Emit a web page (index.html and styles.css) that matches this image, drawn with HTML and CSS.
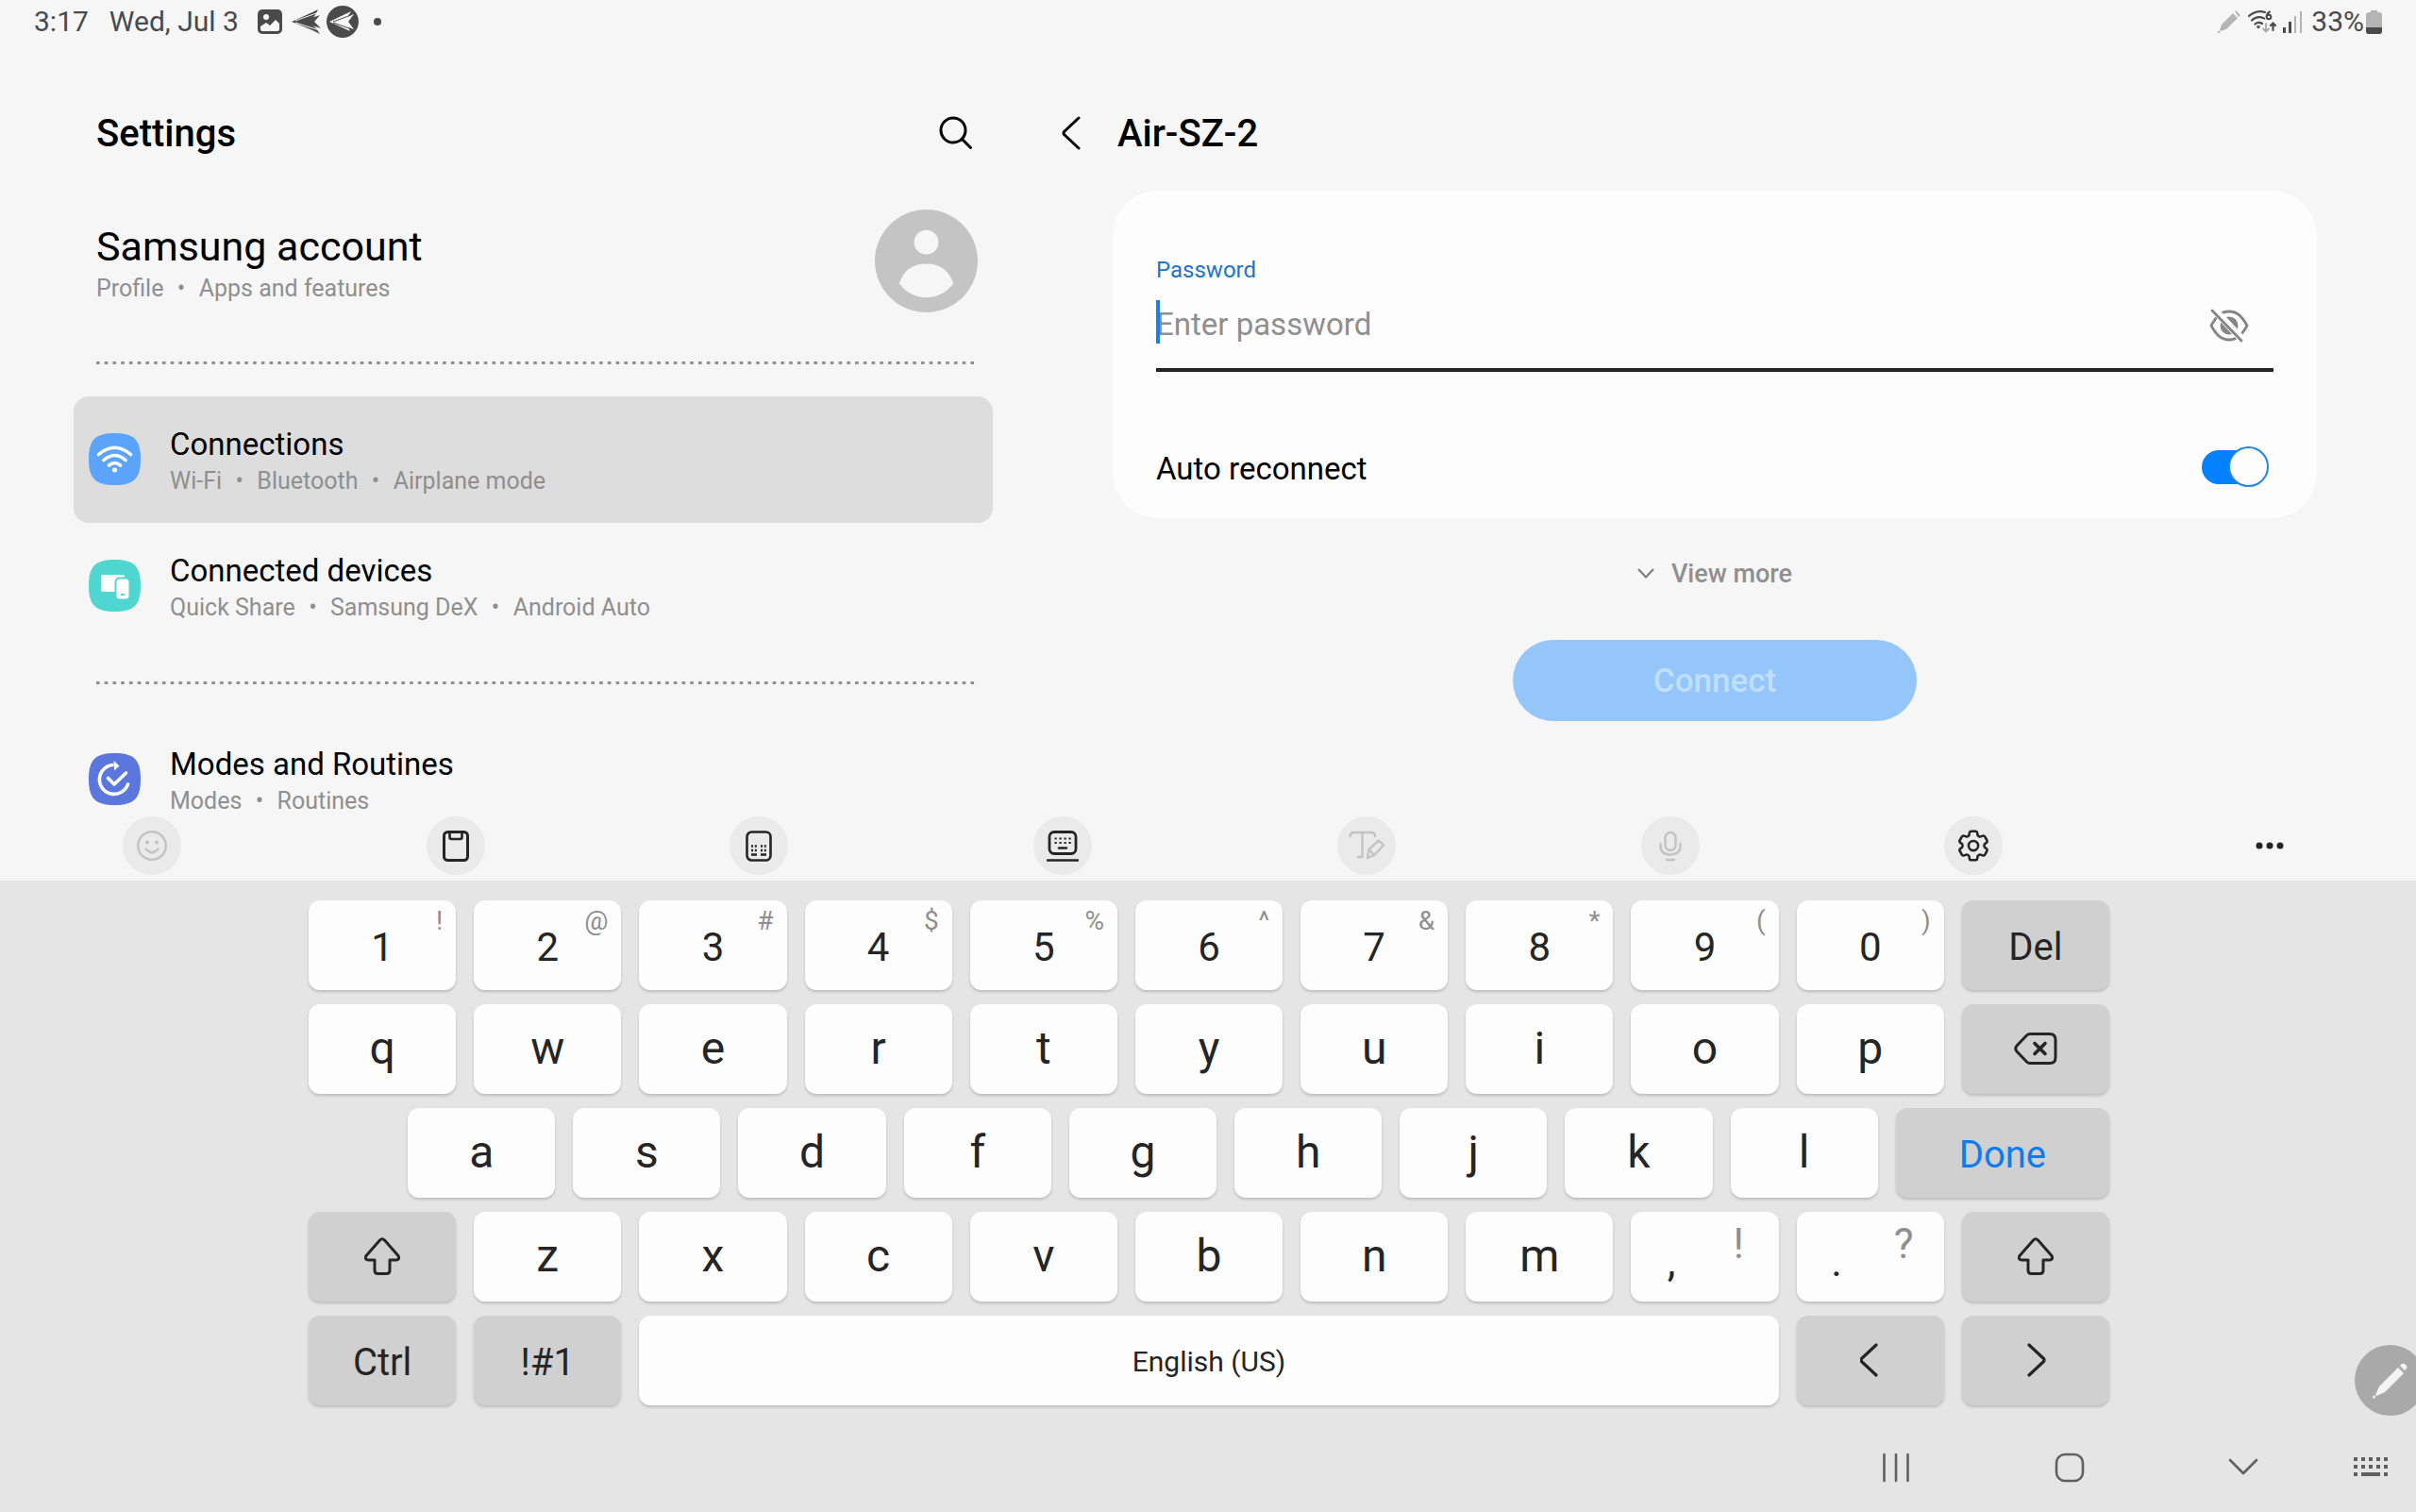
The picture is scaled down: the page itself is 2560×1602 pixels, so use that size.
FILE: index.html
```html
<!DOCTYPE html>
<html lang="en">
<head>
<meta charset="utf-8">
<meta name="viewport" content="width=device-width, initial-scale=1">
<title>Wi-Fi network settings</title>
<link rel="stylesheet" href="styles.css">
</head>
<body>
<header class="status">
  <div class="status-left">
    <span>3:17</span>
    <span class="date">Wed, Jul 3</span>
    <svg class="st-picture" width="26" height="26" viewBox="0 0 26 26"><rect width="26" height="26" rx="5" fill="#4a4a4a"/><circle cx="9" cy="8" r="3" fill="#f6f6f6"/><path d="M3 18l6-4 4 3 6-6 4 4v6a2 2 0 0 1-2 2H5a2 2 0 0 1-2-2z" fill="#f6f6f6"/></svg>
    <svg class="st-plane" width="32" height="26" viewBox="0 0 32 26"><path d="M0 13L22 3l6-3-3 6-4 5 1 2-1 3 5 4 4 6-8-4z" fill="#4a4a4a"/><path d="M4 12L29 3M4 14l25 8" stroke="#f6f6f6" stroke-width="1"/><path d="M12 12l18-6-6 7 7 7-19-6z" fill="#4a4a4a"/></svg>
    <svg class="st-disc" width="34" height="34" viewBox="0 0 34 34"><circle cx="17" cy="17" r="17" fill="#4a4a4a"/><path d="M3 17L26 6l-3 5 6-2-6 8 6 8-6-2 2 4z" fill="#f6f6f6"/><path d="M7 17l19-7M7 18l17 6" stroke="#4a4a4a" stroke-width="1"/></svg>
    <span class="st-dot"></span>
  </div>
  <div class="status-right">
    <svg width="24" height="24" viewBox="0 0 24 24" fill="#b4b4b4"><path d="M16 3l5 5L9 20l-6 2-1-1 2-6zM18 1l1-1 5 5-2 2z"/><circle cx="1" cy="23" r="1.200"/></svg>
    <svg class="st-wifi" width="30" height="24" viewBox="0 0 30 24" fill="none" stroke="#4a4a4a" stroke-width="2.200" stroke-linecap="round"><path d="M1 6Q9-1 18 2M4 10.500Q10 5 17 8.500M7.500 14.500Q11 11.500 15 14"/><circle cx="11" cy="17.500" r=".7"/><circle cx="22" cy="7" r="2.300" stroke-width="2"/><path d="M19.700 6.500Q20 3 23 1.500" stroke-width="2"/><path d="M19 14v8M16 19.500l3 3 3-3" stroke="#a9a9a9" stroke-width="1.800"/><path d="M26.500 21v-7M24 16l2.500-2.500L29 16"/></svg>
    <svg width="20" height="23" viewBox="0 0 20 23"><path d="M0 17h3v6H0zM6 11h3v12H6z" fill="#4a4a4a"/><path d="M12 5h2v18h-2zM18 0h2v23h-2z" fill="#b4b4b4"/></svg>
    <span class="percent">33%</span>
    <svg width="17" height="25" viewBox="0 0 17 25"><path d="M5 0h7v2h2a3 3 0 0 1 3 3v17a3 3 0 0 1-3 3H3a3 3 0 0 1-3-3V5a3 3 0 0 1 3-3h2z" fill="#b4b4b4"/><path d="M0 18h17v4a3 3 0 0 1-3 3H3a3 3 0 0 1-3-3z" fill="#4a4a4a"/></svg>
  </div>
</header>

<main class="screen">
  <nav class="panel-left" aria-label="Settings">
    <div class="bar">
      <h1>Settings</h1>
      <button class="plain" aria-label="Search"><svg width="36" height="36" viewBox="0 0 36 36" fill="none" stroke="#000" stroke-width="3" stroke-linecap="round"><circle cx="15" cy="15" r="13"/><path d="M24.500 24.500l9 9"/></svg></button>
    </div>
    <a class="account" href="#account">
      <span class="words">
        <span class="account-name">Samsung account</span>
        <span class="sub">Profile <span class="sep">&nbsp;•&nbsp;</span> Apps and features</span>
      </span>
      <svg width="109" height="109" viewBox="0 0 110 110"><circle cx="55" cy="55" r="55" fill="#c4c4c4"/><circle cx="55" cy="35" r="13" fill="#f6f6f6"/><path d="M26 79Q33 58 55 58t29 21Q73 94 55 94T26 79z" fill="#f6f6f6"/></svg>
    </a>
    <svg class="dots" height="3"><line x1="0" y1="1.500" x2="100%" y2="1.500" stroke="#8f8f8f" stroke-width="3" stroke-dasharray="3.600 5.140"/></svg>
    <a class="row selected" href="#connections">
      <svg width="55" height="55" viewBox="0 0 55 55"><path d="M27.500 0C48 0 55 7 55 27.500S48 55 27.500 55 0 48 0 27.500 7 0 27.500 0z" fill="#5aa5fb"/><g fill="none" stroke="#fff" stroke-width="3.600" stroke-linecap="round"><path d="M10.500 22.500Q27.500 8 44.500 22.500M16 28.500Q27.500 18.500 39 28.500M21.500 34Q27.500 29 33.500 34"/></g><circle cx="27.500" cy="39" r="2.500" fill="#fff"/></svg>
      <span class="words"><span class="title">Connections</span><span class="sub">Wi-Fi <span class="sep">&nbsp;•&nbsp;</span> Bluetooth <span class="sep">&nbsp;•&nbsp;</span> Airplane mode</span></span>
    </a>
    <a class="row" href="#devices">
      <svg width="55" height="55" viewBox="0 0 55 55"><path d="M27.500 0C48 0 55 7 55 27.500S48 55 27.500 55 0 48 0 27.500 7 0 27.500 0z" fill="#50d6d0"/><rect x="13" y="16" width="25" height="18" rx="2" fill="#fff"/><rect x="28.500" y="19.500" width="15" height="23" rx="4" fill="#fff" stroke="#50d6d0" stroke-width="2"/><rect x="34" y="36" width="4" height="2" fill="#50d6d0"/></svg>
      <span class="words"><span class="title">Connected devices</span><span class="sub">Quick Share <span class="sep">&nbsp;•&nbsp;</span> Samsung DeX <span class="sep">&nbsp;•&nbsp;</span> Android Auto</span></span>
    </a>
    <svg class="dots dots-list" height="3"><line x1="0" y1="1.500" x2="100%" y2="1.500" stroke="#8f8f8f" stroke-width="3" stroke-dasharray="3.600 5.140"/></svg>
    <a class="row" href="#modes">
      <svg width="55" height="55" viewBox="0 0 55 55"><path d="M27.500 0C48 0 55 7 55 27.500S48 55 27.500 55 0 48 0 27.500 7 0 27.500 0z" fill="#5b77dd"/><g fill="none" stroke="#fff" stroke-width="3.600" stroke-linecap="round" stroke-linejoin="round"><path d="M25 12.500A15.500 15.500 0 1 0 41.500 33M20.500 26.500l6.500 6.500 12.500-12"/></g><path d="M26.500 8l6 5.500-5.500 5z" fill="#fff"/></svg>
      <span class="words"><span class="title">Modes and Routines</span><span class="sub">Modes <span class="sep">&nbsp;•&nbsp;</span> Routines</span></span>
    </a>
  </nav>

  <section class="panel-right">
    <div class="bar bar-right">
      <button class="plain" aria-label="Back"><svg width="22" height="36" viewBox="0 0 22 36" fill="none" stroke="#000" stroke-width="3" stroke-linecap="round" stroke-linejoin="round"><path d="M19 2L3.500 16.500q-1 1.500 0 3L19 34"/></svg></button>
      <h1>Air-SZ-2</h1>
    </div>
    <form class="form">
      <div class="card">
        <label class="pw-label" for="pw">Password</label>
        <div class="field">
          <input class="pw" id="pw" type="password" placeholder="Enter password">
          <span class="caret"></span>
          <button class="plain" type="button" aria-label="Show password"><svg width="42" height="36" viewBox="0 0 42 36"><g fill="none" stroke="#858585" stroke-width="2.800"><path d="M21 3c9 0 14 6 19 15-5 9-10 15-19 15S7 27 2 18C7 9 12 3 21 3z"/></g><circle cx="21" cy="18" r="9.500" fill="#858585"/><path d="M5 1l31 33" stroke="#fdfdfd" stroke-width="8"/><path d="M3 2l31 32" stroke="#858585" stroke-width="2.800" stroke-linecap="round"/></svg></button>
        </div>
        <div class="reconnect">
          <label for="auto">Auto reconnect</label>
          <input class="toggle" id="auto" type="checkbox" checked>
        </div>
      </div>
      <button class="plain more" type="button"><svg width="18" height="12" viewBox="0 0 18 12" fill="none" stroke="#7a7a7a" stroke-width="2" stroke-linecap="round"><path d="M1.500 1.500L9 9.500l7.500-8"/></svg>View more</button>
      <button class="connect" type="submit" disabled>Connect</button>
    </form>
  </section>
</main>

<div class="toolbar">
  <button class="tool" aria-label="Emoji"><svg width="32" height="32" viewBox="0 0 32 32" fill="none" stroke="#c3c3c3" stroke-width="2.400" stroke-linecap="round"><circle cx="16" cy="16" r="14.800"/><path d="M9.500 19.500q6.500 7.500 13 0"/><g fill="#c3c3c3" stroke="none"><circle cx="11" cy="12.500" r="2"/><circle cx="21" cy="12.500" r="2"/></g></svg></button>
  <button class="tool" aria-label="Clipboard"><svg width="28" height="33" viewBox="0 0 28 33" fill="none" stroke="#252525" stroke-width="3"><rect x="1.500" y="1.500" width="25" height="30" rx="4"/><path d="M7.500 2v5q0 2 2 2h9q2 0 2-2V2" stroke-width="2.600"/></svg></button>
  <button class="tool" aria-label="Split keyboard"><svg width="28" height="33" viewBox="0 0 28 33" fill="none" stroke="#252525" stroke-width="2.600"><rect x="1.500" y="1.500" width="25" height="30" rx="5"/><path d="M6 16.500h6M16 16.500h6M6 21h6M16 21h6" stroke-dasharray="2 1.800"/><path d="M6 25.500h6M16 25.500h6"/></svg></button>
  <button class="tool" aria-label="Keyboard mode"><svg width="34" height="33" viewBox="0 0 34 33" fill="none" stroke="#252525" stroke-width="2.800"><rect x="3" y="1.500" width="28" height="23" rx="5"/><path d="M8.500 8.500h18M8.500 13h18" stroke-dasharray="2.200 2.800" stroke-width="2.200"/><path d="M13 18.500h8M1 31.500h32" stroke-linecap="round" stroke-width="2.600"/></svg></button>
  <button class="tool" aria-label="Handwriting"><svg width="38" height="32" viewBox="0 0 38 32" fill="none" stroke="#c3c3c3" stroke-width="2.400" stroke-linecap="round" stroke-linejoin="round"><path d="M1.500 6q0-4 4-4H24q4 0 4 4M14.500 2v26H10M20 29l1.500-9L32 10.500l5 5L27 26zM21.500 20l5.500 6"/></svg></button>
  <button class="tool" aria-label="Voice input"><svg width="24" height="33" viewBox="0 0 24 33" fill="none" stroke="#c3c3c3" stroke-width="2.400" stroke-linecap="round"><rect x="6.500" y="2" width="11" height="19" rx="5.500"/><path d="M1.500 14v2q0 9.500 10.500 9.500T22.500 16v-2M8 31h8"/></svg></button>
  <button class="tool" aria-label="Keyboard settings"><svg width="34" height="34" viewBox="2 2 20 20" fill="none" stroke="#252525" stroke-width="1.500"><path d="M9.594 3.940c.09-.542.56-.94 1.110-.94h2.593c.55 0 1.020.398 1.110.94l.213 1.281c.063.374.313.686.645.87.074.04.147.083.22.127.325.196.72.257 1.075.124l1.217-.456a1.125 1.125 0 0 1 1.370.49l1.296 2.247a1.125 1.125 0 0 1-.26 1.431l-1.003.827c-.293.241-.438.613-.43.992a7.723 7.723 0 0 1 0 .255c-.008.378.137.75.43.991l1.004.827c.424.35.534.955.26 1.430l-1.298 2.247a1.125 1.125 0 0 1-1.369.491l-1.217-.456c-.355-.133-.75-.072-1.076.124a6.470 6.470 0 0 1-.22.128c-.331.183-.581.495-.644.869l-.213 1.281c-.09.543-.56.94-1.110.94h-2.594c-.55 0-1.019-.398-1.110-.94l-.213-1.281c-.062-.374-.312-.686-.644-.87a6.520 6.520 0 0 1-.22-.127c-.325-.196-.72-.257-1.076-.124l-1.217.456a1.125 1.125 0 0 1-1.369-.49l-1.297-2.247a1.125 1.125 0 0 1 .26-1.431l1.004-.827c.292-.24.437-.613.43-.991a6.932 6.932 0 0 1 0-.255c.007-.38-.138-.751-.43-.992l-1.004-.827a1.125 1.125 0 0 1-.26-1.430l1.297-2.247a1.125 1.125 0 0 1 1.370-.491l1.216.456c.356.133.751.072 1.076-.124.072-.044.146-.086.22-.128.332-.183.582-.495.644-.869l.214-1.280z"/><circle cx="12" cy="12" r="3"/></svg></button>
  <button class="tool tool-more" aria-label="More"><svg width="30" height="8" viewBox="0 0 30 8" fill="#252525"><circle cx="4" cy="4" r="3.500"/><circle cx="15" cy="4" r="3.500"/><circle cx="26" cy="4" r="3.500"/></svg></button>
</div>

<div class="keyboard">
  <div class="keys">
    <div class="keyrow">
      <button class="key num">1<span class="hint">!</span></button>
      <button class="key num">2<span class="hint">@</span></button>
      <button class="key num">3<span class="hint">#</span></button>
      <button class="key num">4<span class="hint">$</span></button>
      <button class="key num">5<span class="hint">%</span></button>
      <button class="key num">6<span class="hint">^</span></button>
      <button class="key num">7<span class="hint">&amp;</span></button>
      <button class="key num">8<span class="hint">*</span></button>
      <button class="key num">9<span class="hint">(</span></button>
      <button class="key num">0<span class="hint">)</span></button>
      <button class="key fn">Del</button>
    </div>
    <div class="keyrow">
      <button class="key">q</button><button class="key">w</button><button class="key">e</button><button class="key">r</button><button class="key">t</button><button class="key">y</button><button class="key">u</button><button class="key">i</button><button class="key">o</button><button class="key">p</button>
      <button class="key fn fn-icon" aria-label="Backspace"><svg width="46" height="34" viewBox="0 0 46 34" fill="none" stroke="#252525" stroke-width="3" stroke-linecap="round" stroke-linejoin="round"><path d="M17 1.500h21q6 0 6 6v19q0 6-6 6H17q-2 0-3.500-1.500L3 20q-2.500-3 0-6L13.500 3Q15 1.500 17 1.500z"/><path d="M22 11.500l11 11M33 11.500l-11 11" stroke-width="3.600"/></svg></button>
    </div>
    <div class="keyrow home-row">
      <span></span>
      <button class="key">a</button><button class="key">s</button><button class="key">d</button><button class="key">f</button><button class="key">g</button><button class="key">h</button><button class="key">j</button><button class="key">k</button><button class="key">l</button>
      <button class="key fn done">Done</button>
    </div>
    <div class="keyrow">
      <button class="key fn fn-icon" aria-label="Shift"><svg width="38" height="40" viewBox="0 0 38 40" fill="none" stroke="#252525" stroke-width="3" stroke-linejoin="round"><path d="M16.500 3q2.500-2.500 5 0L36 19.500q2 4-2 4.500h-7v11q0 3.500-3.500 3.500h-9Q11 38.500 11 35V24H4q-4-.5-2-4.500z"/></svg></button>
      <button class="key">z</button><button class="key">x</button><button class="key">c</button><button class="key">v</button><button class="key">b</button><button class="key">n</button><button class="key">m</button>
      <button class="key pair"><span class="low">,</span><span class="high">!</span></button>
      <button class="key pair"><span class="low">.</span><span class="high">?</span></button>
      <button class="key fn fn-icon" aria-label="Shift"><svg width="38" height="40" viewBox="0 0 38 40" fill="none" stroke="#252525" stroke-width="3" stroke-linejoin="round"><path d="M16.500 3q2.500-2.500 5 0L36 19.500q2 4-2 4.500h-7v11q0 3.500-3.500 3.500h-9Q11 38.500 11 35V24H4q-4-.5-2-4.500z"/></svg></button>
    </div>
    <div class="keyrow">
      <button class="key fn">Ctrl</button>
      <button class="key fn">!#1</button>
      <button class="key space">English (US)</button>
      <button class="key fn fn-icon" aria-label="Cursor left"><svg width="22" height="36" viewBox="0 0 22 36" fill="none" stroke="#252525" stroke-width="3.200" stroke-linecap="round" stroke-linejoin="round"><path d="M17 2L1.500 16.500q-1 1.500 0 3L17 34"/></svg></button>
      <button class="key fn fn-icon" aria-label="Cursor right"><svg width="22" height="36" viewBox="0 0 22 36" fill="none" stroke="#252525" stroke-width="3.200" stroke-linecap="round" stroke-linejoin="round"><path d="M4 2l15.500 14.500q1 1.500 0 3L4 34"/></svg></button>
    </div>
  </div>
  <div class="sysnav">
    <button class="plain" aria-label="Recents"><svg width="36" height="32" viewBox="0 0 36 32" fill="none" stroke="#606060" stroke-width="2.600" stroke-linecap="round"><path d="M5.500 2v28M18 2v28M30.500 2v28"/></svg></button>
    <button class="plain" aria-label="Home"><svg width="36" height="32" viewBox="0 0 36 32" fill="none" stroke="#606060" stroke-width="2.600"><rect x="4" y="2" width="28" height="28" rx="9"/></svg></button>
    <button class="plain" aria-label="Hide keyboard"><svg width="36" height="32" viewBox="0 0 36 32" fill="none" stroke="#606060" stroke-width="2.600" stroke-linecap="round" stroke-linejoin="round"><path d="M4 8l14 14L32 8"/></svg></button>
    <button class="plain ime" aria-label="Switch keyboard"><svg width="36" height="32" viewBox="0 0 36 32" fill="#606060"><path d="M0 5h4v4H0zM8 5h4v4H8zM16 5h4v4h-4zM24 5h4v4h-4zM32 5h4v4h-4zM0 13h4v4H0zM8 13h4v4H8zM16 13h4v4h-4zM24 13h4v4h-4zM32 13h4v4h-4zM0 21h4v4H0zM8 21h20v4H8zM32 21h4v4h-4z"/></svg></button>
  </div>
</div>
<button class="pen" aria-label="Air command"><svg width="38" height="38" viewBox="0 0 38 38" fill="#f4f4f4"><path d="M27 5l6 6L13 31l-9 4-1-1 4-9zM29 3l2-2q2-1 4 1t1 4l-2 2z"/><circle cx="1.500" cy="36" r="1.500"/></svg></button>
</body>
</html>
```

FILE: styles.css
```css
* { box-sizing: border-box; }

body {
  margin: 0;
  height: 100vh;
  display: flex;
  flex-direction: column;
  overflow: hidden;
  position: relative;
  background: #f6f6f6;
  color: #000;
  font-family: Roboto, "Liberation Sans", sans-serif;
}

svg { display: block; flex: none; }
a { color: inherit; text-decoration: none; }
button, input { font-family: inherit; }

.plain {
  border: 0;
  padding: 0;
  background: none;
  display: flex;
  align-items: center;
}

/* status bar */
.status {
  height: 46px;
  padding: 0 36px;
  display: flex;
  justify-content: space-between;
  align-items: center;
  flex: none;
  font-size: 30px;
  line-height: 46px;
  color: #4a4a4a;
}
.status-left, .status-right { display: flex; align-items: center; }
.date { margin-left: 22px; }
.st-picture { margin-left: 20px; }
.st-plane { margin-left: 10px; }
.st-disc { margin-left: 5px; }
.st-dot {
  width: 8px;
  height: 8px;
  margin-left: 16px;
  border-radius: 50%;
  background: #4a4a4a;
}
.st-wifi { margin: 0 7px 0 8px; }
.percent { margin: 0 2px 0 10px; }

/* settings */
.screen {
  flex: 1 1 0;
  min-height: 0;
  overflow: hidden;
  display: grid;
  grid-template-columns: 1116fr 1444fr;
}
.panel-left { padding: 71px 64px 0 78px; }
.panel-right { padding: 71px 105px 0 0; }
.bar {
  height: 48px;
  padding: 0 21px 0 24px;
  display: flex;
  align-items: center;
  justify-content: space-between;
}
.bar-right {
  padding: 0 0 0 8px;
  justify-content: flex-start;
  gap: 38px;
}
h1 {
  margin: 0;
  padding-top: 2px;
  font-size: 40px;
  line-height: 48px;
  font-weight: 500;
}
.account {
  display: flex;
  align-items: center;
  justify-content: space-between;
  margin: 57px 16px 52px 24px;
}
.words { display: flex; flex-direction: column; gap: 5px; padding-top: 4px; }
.account-name { font-size: 43px; line-height: 50px; }
.sub { font-size: 25px; line-height: 30px; color: #8f8f8f; }
.sep { margin: 0 2px; }
.title { font-size: 33px; line-height: 38px; }
.dots { width: calc(100% - 42px); margin: 0 18px 34px 24px; }
.dots-list { margin-top: 34px; }
.row {
  height: 134px;
  padding: 0 16px 2px;
  display: flex;
  align-items: center;
  gap: 31px;
  border-radius: 16px;
}
.selected { background: #dddddd; }

/* network form */
.form {
  margin: 37px 0 0 63px;
  display: flex;
  flex-direction: column;
  align-items: center;
}
.card {
  width: 100%;
  padding: 70px 46px 33px;
  border-radius: 48px;
  background: #fdfdfd;
}
.pw-label {
  display: block;
  font-size: 24px;
  line-height: 28px;
  color: #1b75c9;
}
.field {
  height: 94px;
  padding-right: 26px;
  display: flex;
  align-items: center;
  position: relative;
  border-bottom: 4px solid #252525;
}
.pw {
  flex: 1;
  min-width: 0;
  height: 48px;
  padding: 0 0 4px;
  border: 0;
  outline: 0;
  background: none;
  font-size: 33px;
}
.pw::placeholder { color: #8f8f8f; opacity: 1; }
.caret {
  position: absolute;
  left: 0;
  top: 18px;
  width: 4px;
  height: 46px;
  background: #1b7fe8;
}
.reconnect {
  margin-top: 79px;
  padding-right: 5px;
  display: flex;
  align-items: center;
  justify-content: space-between;
  font-size: 33px;
}
.reconnect label { line-height: 38px; padding-top: 5px; }
.toggle {
  appearance: none;
  width: 71px;
  height: 43px;
  margin: 0;
  position: relative;
}
.toggle::before {
  content: "";
  position: absolute;
  inset: 4px 3px 3px 0;
  border-radius: 18px;
  background: #0381fe;
}
.toggle::after {
  content: "";
  position: absolute;
  right: 0;
  top: 0;
  box-sizing: border-box;
  width: 43px;
  height: 43px;
  border: 2px solid #2185ea;
  border-radius: 50%;
  background: #fdfdfd;
}
.more {
  margin: 44px 0 55px;
  gap: 18px;
  font-size: 27px;
  line-height: 30px;
  font-weight: 500;
  color: #8f8f8f;
}
.connect {
  width: 428px;
  height: 86px;
  border: 0;
  border-radius: 43px;
  background: #94c6fa;
  color: #c0dffc;
  font-size: 35px;
  font-weight: 500;
}

/* keyboard toolbar */
.toolbar {
  flex: none;
  padding: 0 132px 6px 130px;
  display: flex;
  justify-content: space-between;
}
.tool {
  width: 62px;
  height: 62px;
  padding: 0;
  border: 0;
  border-radius: 50%;
  background: #eaeaea;
  display: grid;
  place-items: center;
}
.tool-more { width: 46px; background: none; }

/* keyboard */
.keyboard { flex: none; background: #e5e5e5; }
.keys {
  width: 75%;
  padding: 21px 5px 0 7px;
  margin: 0 auto;
  display: grid;
  gap: 15px;
}
.keyrow {
  display: grid;
  grid-template-columns: repeat(11, minmax(0, 1fr));
  gap: 19px;
}
.home-row { grid-template-columns: 86fr repeat(9, 156fr) 226fr; }
.key {
  height: 95px;
  padding: 0 0 2px;
  border: 0;
  border-radius: 12px;
  background: #fdfdfd;
  box-shadow: 0 2px 3px rgba(0, 0, 0, 0.18);
  color: #252525;
  font-size: 48px;
  display: flex;
  align-items: center;
  justify-content: center;
  position: relative;
}
.num { font-size: 42px; padding: 4px 0 0; }
.hint {
  position: absolute;
  top: 8px;
  right: 14px;
  font-size: 28px;
  line-height: 28px;
  color: #8f8f8f;
}
.fn { background: #d0d0d0; font-size: 40px; padding: 4px 0 0; }
.fn-icon { padding: 0 0 2px; }
.done { color: #0f7bf0; }
.space { grid-column: span 7; font-size: 30px; padding: 2px 0 0; }
.pair {
  display: grid;
  grid-template-columns: 1fr 1fr;
  padding: 8px 7px 16px;
  font-size: 44px;
  line-height: 52px;
}
.low { align-self: end; }
.high { align-self: start; color: #8f8f8f; }

/* system navigation */
.sysnav {
  height: 113px;
  padding: 18px 30px 0 0;
  display: flex;
  align-items: center;
  justify-content: flex-end;
  gap: 148px;
}
.ime { margin-left: -49px; }

.pen {
  position: absolute;
  right: -10px;
  bottom: 102px;
  width: 75px;
  height: 75px;
  padding: 0;
  border: 0;
  border-radius: 50%;
  background: #a9a9a9;
  display: grid;
  place-items: center;
}
```
